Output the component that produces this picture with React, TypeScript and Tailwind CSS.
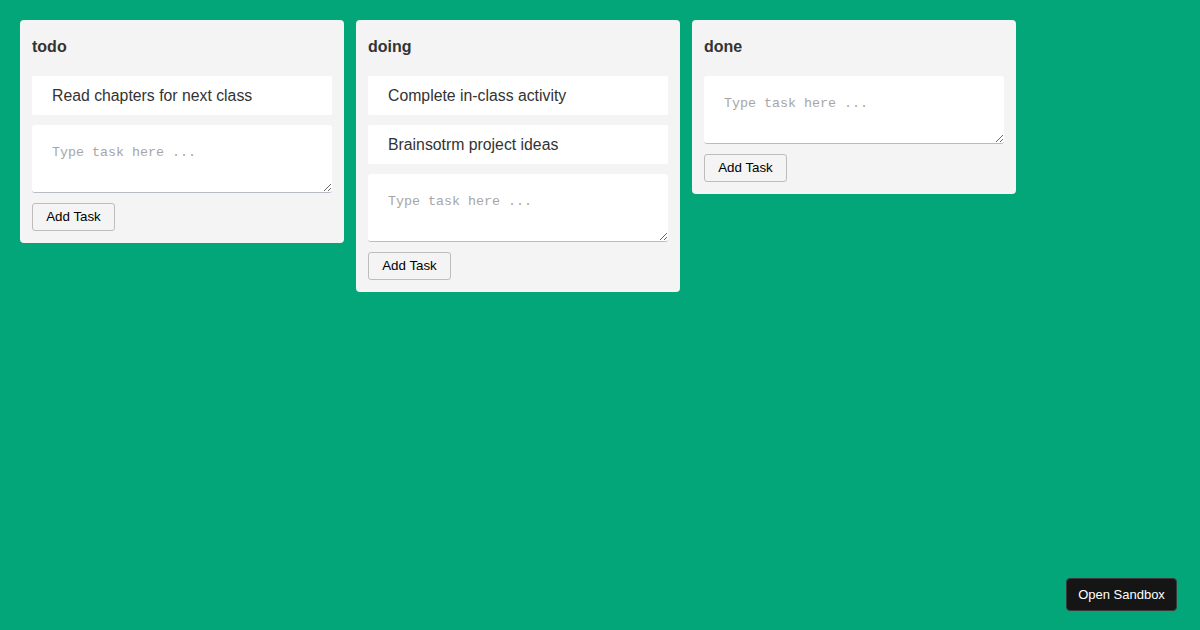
import React from "react";

const columns = [
  { title: "todo", tasks: ["Read chapters for next class"] },
  { title: "doing", tasks: ["Complete in-class activity", "Brainsotrm project ideas"] },
  { title: "done", tasks: [] as string[] },
];

function Column({ title, tasks }: { title: string; tasks: string[] }) {
  return (
    <div className="w-[324px] bg-[#f4f4f4] rounded-[4px] p-[12px] flex flex-col">
      <div className="h-[44px] leading-[30px] text-[16px] font-bold text-[#333]">{title}</div>
      <div className="flex flex-col gap-[10px]">
        {tasks.map((t) => (
          <div key={t} className="bg-white rounded-[2px] h-[39px] pl-[20px] flex items-center text-[15.8px] text-[#333]">
            {t}
          </div>
        ))}
        <textarea
          placeholder="Type task here ..."
          className="block w-full h-[68px] bg-white rounded-[3px] border-0 border-b border-b-[#b8bcc6] px-[20px] pt-[20px] text-[13.33px] leading-[16px] text-[#333] placeholder:text-[#a6a6a6] outline-none"
          style={{ fontFamily: '"Liberation Mono", monospace' }}
        />
      </div>
      <div className="mt-[10px]">
        <button className="h-[28px] w-[83px] border border-[#bdbdbd] rounded-[3px] bg-[#f4f4f4] text-[13.33px] text-black">
          Add Task
        </button>
      </div>
    </div>
  );
}

export default function App() {
  return (
    <div
      className="relative w-[1200px] h-[630px] bg-[#03a678] p-[20px] flex items-start gap-[12px]"
      style={{ fontFamily: '"Liberation Sans", Arial, sans-serif' }}
    >
      {columns.map((c) => (
        <Column key={c.title} title={c.title} tasks={c.tasks} />
      ))}
      <div className="absolute left-[1066px] top-[578px] w-[111px] h-[33px] bg-[#151515] border border-[#3a3a3a] rounded-[4px] text-white text-[13px] flex items-center justify-center">
        Open Sandbox
      </div>
    </div>
  );
}
